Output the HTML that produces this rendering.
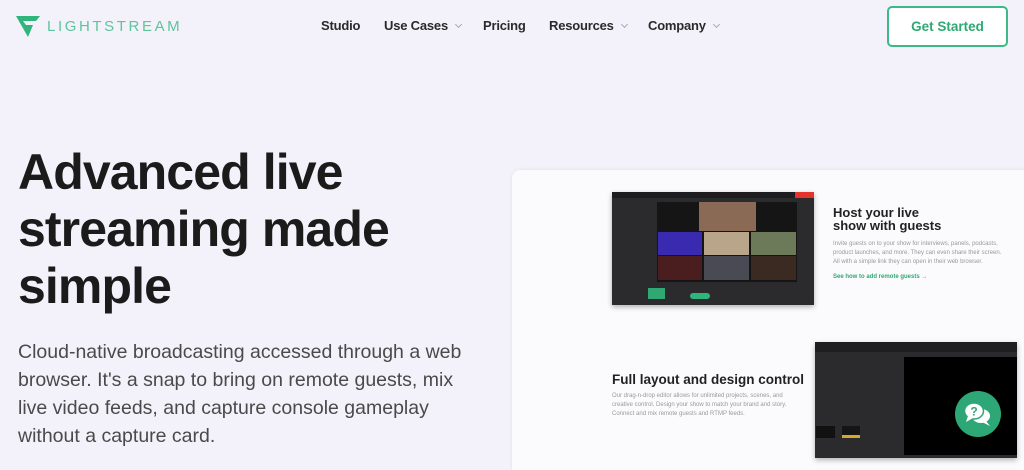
<!DOCTYPE html>
<html><head><meta charset="utf-8"><style>
*{margin:0;padding:0;box-sizing:border-box}
body{width:1024px;height:461px;overflow:hidden;background:#f3f2fa;font-family:"Liberation Sans",Arial,sans-serif;position:relative;color:#1e1e1e}
.a{position:absolute}
.nav{font-size:13px;font-weight:bold;color:#2a2a2a;top:18px;letter-spacing:-0.2px}
.chev{display:inline-block;width:5px;height:5px;border-right:1.3px solid #aaa;border-bottom:1.3px solid #aaa;transform:rotate(45deg);margin-left:8px;position:relative;top:-3px}
h1{position:absolute;left:18px;top:144px;font-size:50px;line-height:57px;font-weight:bold;color:#1b1b1b;letter-spacing:-0.9px}
.p{left:18px;top:338px;width:458px;font-size:19.5px;line-height:28px;color:#4a4a4a}
.card{left:512px;top:170px;width:520px;height:300px;background:#fbfbfd;border-radius:8px 0 0 0;box-shadow:0 0 4px rgba(0,0,0,.08)}
.sm{font-size:6px;color:#999;line-height:9px}
</style></head><body>
<svg class="a" style="left:16px;top:16px" width="24" height="21" viewBox="0 0 24 21"><path d="M0 0H24L20 5H7L10 9H17L12 21Z" fill="#2fb47c"/></svg>
<div class="a" style="left:47px;top:18px;font-size:15px;letter-spacing:2.6px;color:#5ec49a">LIGHTSTREAM</div>
<div class="a nav" style="left:321px">Studio</div>
<div class="a nav" style="left:384px">Use Cases<span class="chev"></span></div>
<div class="a nav" style="left:483px">Pricing</div>
<div class="a nav" style="left:549px">Resources<span class="chev"></span></div>
<div class="a nav" style="left:648px">Company<span class="chev"></span></div>
<div class="a" style="left:887px;top:6px;width:121px;height:41px;border:2px solid #3db988;border-radius:5px;background:#fff;color:#2fa874;font-weight:bold;font-size:13.5px;text-align:center;line-height:37px">Get Started</div>
<h1>Advanced live<br>streaming made<br>simple</h1>
<div class="a p">Cloud-native broadcasting accessed through a web browser. It's a snap to bring on remote guests, mix live video feeds, and capture console gameplay without a capture card.</div>
<div class="a card"></div>
<div class="a" style="left:612px;top:192px;width:202px;height:113px;background:#2b2b2d;box-shadow:0 2px 5px rgba(0,0,0,.3)">
 <div class="a" style="left:0;top:0;width:202px;height:6px;background:#1d1d1f"></div>
 <div class="a" style="left:183px;top:0;width:19px;height:6px;background:#e5322d"></div>
 <div class="a" style="left:45px;top:10px;width:140px;height:80px;background:#151515"></div>
 <div class="a" style="left:87px;top:10px;width:57px;height:29px;background:#8a6a55"></div>
 <div class="a" style="left:46px;top:40px;width:44px;height:23px;background:#3a2ab0"></div>
 <div class="a" style="left:92px;top:40px;width:45px;height:23px;background:#b8a58a"></div>
 <div class="a" style="left:139px;top:40px;width:45px;height:23px;background:#6c7a5a"></div>
 <div class="a" style="left:46px;top:64px;width:44px;height:24px;background:#4a1e1e"></div>
 <div class="a" style="left:92px;top:64px;width:45px;height:24px;background:#4a4a55"></div>
 <div class="a" style="left:139px;top:64px;width:45px;height:24px;background:#3a2a22"></div>
 <div class="a" style="left:36px;top:96px;width:17px;height:11px;background:#2fa874"></div>
 <div class="a" style="left:78px;top:101px;width:20px;height:6px;border-radius:3px;background:#2fb47c"></div>
</div>
<div class="a" style="left:833px;top:206px;font-size:13px;font-weight:bold;line-height:13px;color:#222">Host your live<br>show with guests</div>
<div class="a sm" style="left:833px;top:240px;width:175px">Invite guests on to your show for interviews, panels, podcasts, product launches, and more. They can even share their screen. All with a simple link they can open in their web browser.</div>
<div class="a" style="left:833px;top:274px;font-size:6px;font-weight:bold;color:#2fa874">See how to add remote guests →</div>
<div class="a" style="left:612px;top:372px;font-size:13.5px;font-weight:bold;color:#222">Full layout and design control</div>
<div class="a sm" style="left:612px;top:392px;width:185px">Our drag-n-drop editor allows for unlimited projects, scenes, and creative control. Design your show to match your brand and story. Connect and mix remote guests and RTMP feeds.</div>
<div class="a" style="left:815px;top:342px;width:202px;height:116px;background:#2b2b2d;box-shadow:0 2px 5px rgba(0,0,0,.3)">
 <div class="a" style="left:0;top:0;width:202px;height:10px;background:#1e1e20"></div>
 <div class="a" style="left:89px;top:15px;width:113px;height:98px;background:#000"></div>
 <div class="a" style="left:1px;top:84px;width:19px;height:12px;background:#111"></div>
 <div class="a" style="left:27px;top:84px;width:18px;height:12px;background:#151515;border-bottom:3px solid #d4a82a"></div>
</div>
<div class="a" style="left:955px;top:391px;width:46px;height:46px;border-radius:50%;background:#2ea776"></div>
<svg class="a" style="left:964px;top:401px" width="28" height="26" viewBox="0 0 28 26">
<ellipse cx="17" cy="15" rx="9" ry="7" fill="#fff"/><path d="M22 20L26 25L18 21Z" fill="#fff"/>
<ellipse cx="10" cy="10" rx="9.5" ry="8" fill="#fff" stroke="#2ea776" stroke-width="1.5"/><path d="M4 15L2 21L9 17Z" fill="#fff"/>
<text x="10" y="14.5" font-size="12" font-weight="bold" text-anchor="middle" fill="#2ea776" font-family="Liberation Sans">?</text>
</svg>
</body></html>
